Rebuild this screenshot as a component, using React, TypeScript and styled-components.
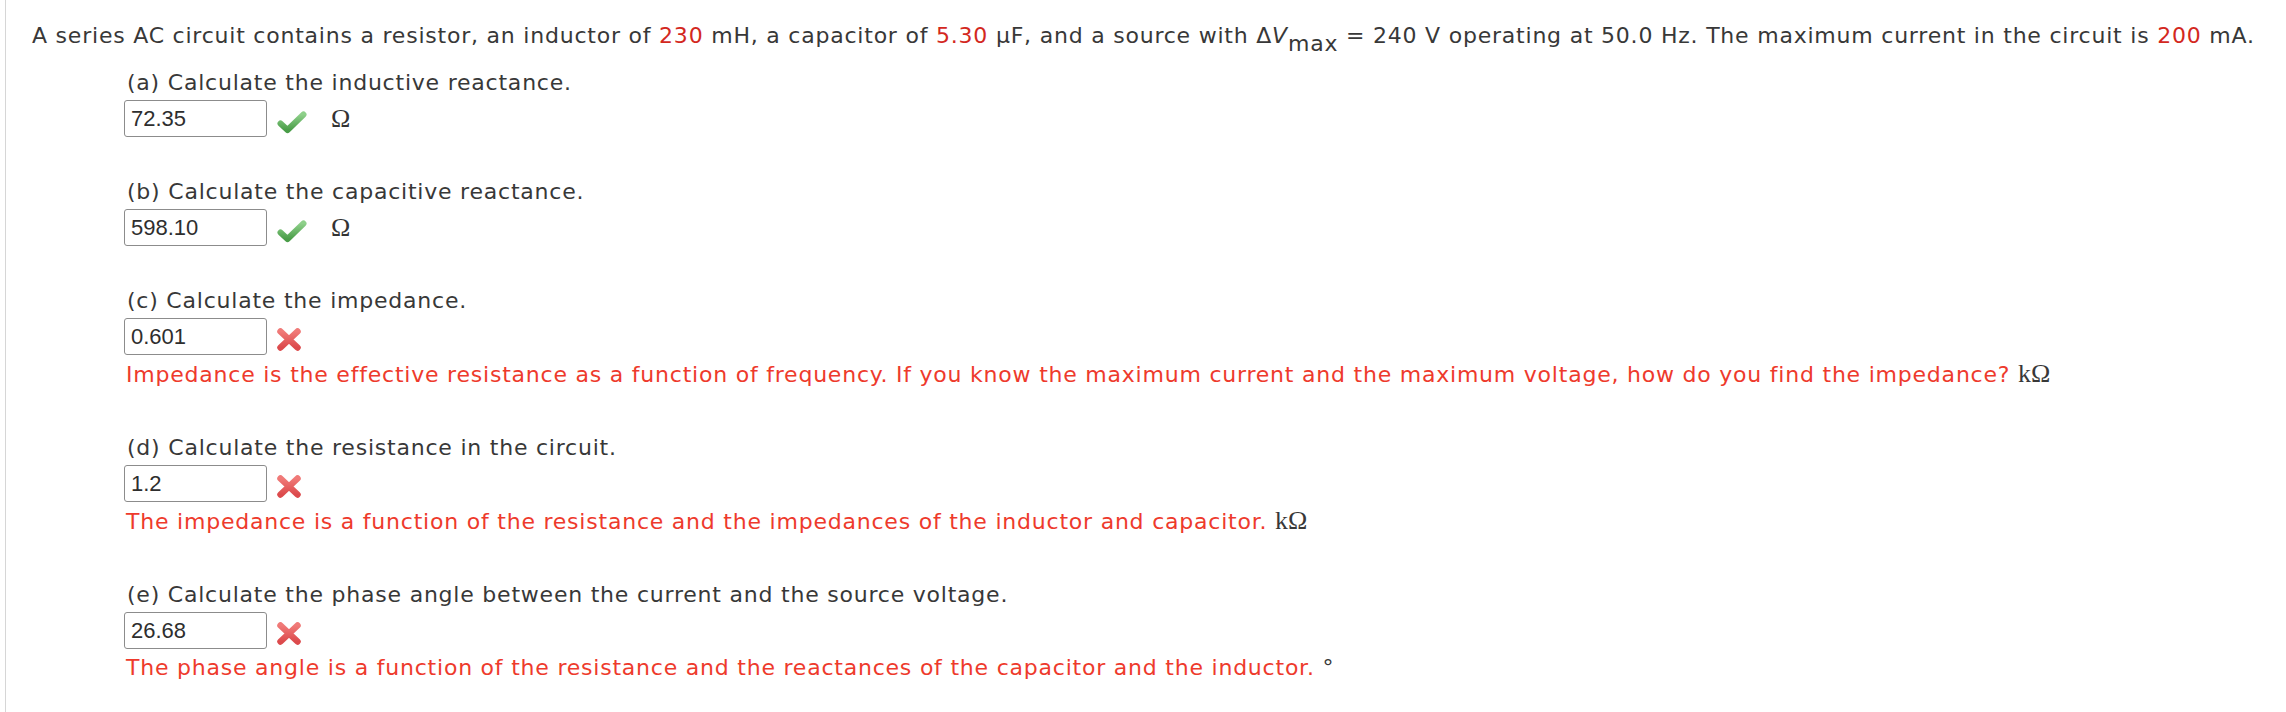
import styled, { createGlobalStyle } from 'styled-components'

const GlobalStyle = createGlobalStyle`
  html, body {
    margin: 0;
    padding: 0;
    background: #ffffff;
  }
`

const Page = styled.div`
  margin-left: 5px;
  min-height: 712px;
  box-sizing: border-box;
  border-left: 1px solid #d6d6d6;
  padding: 21px 0 0 26px;
  font-family: 'DejaVu Sans', Verdana, sans-serif;
  font-size: 22px;
  letter-spacing: 0.78px;
  line-height: 30px;
  color: #383838;
`

const Intro = styled.div`
  white-space: nowrap;
`

const Value = styled.span`
  color: #d3281e;
`

const Sub = styled.sub`
  font-size: 22px;
  line-height: 0;
  vertical-align: -0.36em;
`

const Parts = styled.div`
  margin: 17px 0 0 92px;
  display: flex;
  flex-direction: column;
  gap: 40px;
`

const Part = styled.div<{ $feedback: boolean }>`
  display: flex;
  flex-direction: column;
  padding-bottom: ${({ $feedback }) => ($feedback ? '3px' : '0')};
`

const Prompt = styled.div`
  padding-left: 3px;
`

const AnswerRow = styled.div`
  margin-top: 2px;
  display: flex;
  align-items: center;
  height: 37px;
`

const AnswerBox = styled.div`
  box-sizing: border-box;
  width: 143px;
  height: 37px;
  border: 1px solid #8c8c8c;
  border-radius: 3px;
  padding: 0 6px;
  display: flex;
  align-items: center;
  font-family: 'Liberation Sans', Arial, sans-serif;
  font-size: 22px;
  letter-spacing: 0;
  color: #2e2e2e;
  background: #fff;
`

const Mark = styled.span<{ $ok: boolean }>`
  display: inline-flex;
  margin-left: ${({ $ok }) => ($ok ? '10px' : '9px')};
  margin-top: 6px;
`

const Unit = styled.span`
  margin-left: 24px;
  font-family: 'Liberation Serif', 'Times New Roman', serif;
  font-size: 26px;
  letter-spacing: 0;
  color: #333;
`

const Feedback = styled.div`
  margin-top: 4px;
  padding-left: 2px;
  color: #ee3a2c;
  white-space: nowrap;
`

const FeedbackUnit = styled.span`
  color: #383838;
  font-family: 'Liberation Serif', 'Times New Roman', serif;
  font-size: 26px;
  letter-spacing: 0;
`

const Degree = styled.span`
  color: #383838;
`

const CheckIcon = () => (
  <svg width='30' height='24' viewBox='0 0 30 24'>
    <defs>
      <linearGradient id='chk' x1='0' y1='0' x2='0' y2='1'>
        <stop offset='0' stopColor='#8ed08a' />
        <stop offset='1' stopColor='#4a9d48' />
      </linearGradient>
    </defs>
    <path
      d='M3.5 13.5 L10.5 20 L26.5 4.5'
      fill='none'
      stroke='url(#chk)'
      strokeWidth='6'
      strokeLinecap='round'
      strokeLinejoin='round'
    />
  </svg>
)

const CrossIcon = () => (
  <svg width='26' height='25' viewBox='0 0 26 25'>
    <defs>
      <linearGradient id='crs' x1='0' y1='0' x2='0' y2='1'>
        <stop offset='0' stopColor='#f07a78' />
        <stop offset='1' stopColor='#dc4a4c' />
      </linearGradient>
    </defs>
    <path
      d='M4.5 4.5 L21.5 20.5 M21.5 4.5 L4.5 20.5'
      fill='none'
      stroke='url(#crs)'
      strokeWidth='6.5'
      strokeLinecap='round'
    />
  </svg>
)

type PartData = {
  label: string
  answer: string
  ok: boolean
  unit?: string
  feedback?: string
  feedbackUnit?: 'kohm' | 'deg'
}

const parts: PartData[] = [
  { label: '(a) Calculate the inductive reactance.', answer: '72.35', ok: true, unit: 'Ω' },
  { label: '(b) Calculate the capacitive reactance.', answer: '598.10', ok: true, unit: 'Ω' },
  {
    label: '(c) Calculate the impedance.',
    answer: '0.601',
    ok: false,
    feedback:
      'Impedance is the effective resistance as a function of frequency. If you know the maximum current and the maximum voltage, how do you find the impedance?',
    feedbackUnit: 'kohm',
  },
  {
    label: '(d) Calculate the resistance in the circuit.',
    answer: '1.2',
    ok: false,
    feedback: 'The impedance is a function of the resistance and the impedances of the inductor and capacitor.',
    feedbackUnit: 'kohm',
  },
  {
    label: '(e) Calculate the phase angle between the current and the source voltage.',
    answer: '26.68',
    ok: false,
    feedback: 'The phase angle is a function of the resistance and the reactances of the capacitor and the inductor.',
    feedbackUnit: 'deg',
  },
]

export default function App() {
  return (
    <>
      <GlobalStyle />
      <Page>
        <Intro>
          A series AC circuit contains a resistor, an inductor of <Value>230</Value> mH, a capacitor of{' '}
          <Value>5.30</Value> μF, and a source with Δ<i>V</i>
          <Sub>max</Sub> = 240 V operating at 50.0 Hz. The maximum current in the circuit is <Value>200</Value> mA.
        </Intro>
        <Parts>
          {parts.map((p) => (
            <Part key={p.label} $feedback={!!p.feedback}>
              <Prompt>{p.label}</Prompt>
              <AnswerRow>
                <AnswerBox>{p.answer}</AnswerBox>
                <Mark $ok={p.ok}>{p.ok ? <CheckIcon /> : <CrossIcon />}</Mark>
                {p.unit && <Unit>{p.unit}</Unit>}
              </AnswerRow>
              {p.feedback && (
                <Feedback>
                  {p.feedback}{' '}
                  {p.feedbackUnit === 'kohm' ? <FeedbackUnit>kΩ</FeedbackUnit> : <Degree>°</Degree>}
                </Feedback>
              )}
            </Part>
          ))}
        </Parts>
      </Page>
    </>
  )
}
